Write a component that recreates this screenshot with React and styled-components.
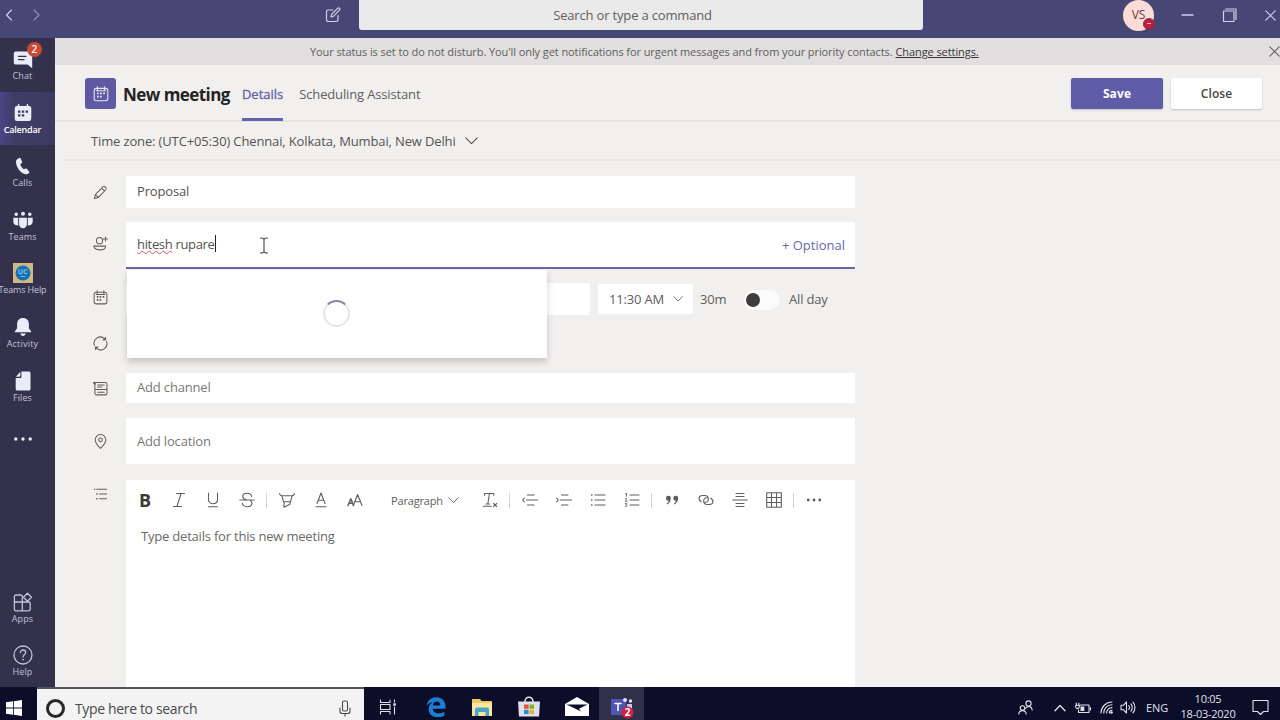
import React, { useState } from 'react';
import styled, { createGlobalStyle, keyframes } from 'styled-components';

const GlobalStyle = createGlobalStyle`
  * {
    box-sizing: border-box;
  }

  body {
    margin: 0;
    overflow: hidden;
    font-family: "Open Sans", "Noto Sans", sans-serif;
    font-size: 13px;
    letter-spacing: -0.17px;
    color: #555351;
  }

  button,
  input {
    font: inherit;
    letter-spacing: inherit;
  }
`;

// shell ==========

const Window = styled.div`
  display: flex;
  flex-direction: column;
  width: 1280px;
  height: 720px;
  overflow: hidden;
  background: #f1f0ef;
`;

const Body = styled.div`
  display: flex;
  height: 649px;
`;

const Svg = styled.svg`
  display: block;
  flex: none;
  width: ${(p) => p.$w || 16}px;
  height: ${(p) => p.$h || p.$w || 16}px;
  fill: none;
  stroke: currentColor;
  stroke-width: ${(p) => p.$stroke || 1.1};
  stroke-linecap: round;
  stroke-linejoin: round;

  .solid {
    fill: currentColor;
    stroke: none;
  }
`;

// title bar ==========

const TitleBar = styled.header`
  display: flex;
  align-items: center;
  height: 38px;
  padding-bottom: 8px;
  background: #464775;
  color: #cfcfee;
`;

const NavArrows = styled.div`
  display: flex;
  gap: 15px;
  width: 325px;
  padding-left: 3px;
`;

const NavArrow = styled.span`
  opacity: ${(p) => (p.$dim ? 0.55 : 1)};
`;

const SearchBox = styled.div`
  width: 564px;
  height: 30px;
  margin-left: 18px;
  border-radius: 0 0 3px 3px;
  background: #ebeaeb;
  color: #605e5c;
  line-height: 30px;
  padding-right: 17px;
  text-align: center;
`;

const Avatar = styled.div`
  position: relative;
  width: 31px;
  height: 31px;
  margin-left: 200px;
  border-radius: 50%;
  background: #fbdcd6;
  color: #6b3d3d;
  font-size: 12px;
  line-height: 30px;
  text-align: center;
`;

const Presence = styled.span`
  position: absolute;
  right: -1px;
  bottom: 1px;
  width: 12px;
  height: 12px;
  border-radius: 50%;
  border: 1px solid #7a3350;
  background: #bd1f3c;

  &::after {
    content: '';
    position: absolute;
    left: 3px;
    top: 4px;
    width: 4px;
    height: 1px;
    background: #f3b7bf;
  }
`;

const WindowControls = styled.div`
  display: flex;
  align-items: center;
  gap: 28px;
  margin-left: 27px;
`;

// left rail ==========

const Rail = styled.nav`
  display: flex;
  flex-direction: column;
  width: 55px;
  background: #33314c;
  color: #dcdcf0;
`;

const RailItem = styled.div`
  position: relative;
  display: flex;
  flex-direction: column;
  align-items: center;
  height: 53.7px;
  padding: ${(p) => p.$top || 11}px 10px 0 0;
  font-size: 9px;
  line-height: 12px;
  letter-spacing: ${(p) => p.$track || 0.1}px;
  white-space: nowrap;
  color: ${(p) => (p.$active ? '#fff' : '#c3c2d8')};
  font-weight: ${(p) => (p.$active ? 600 : 400)};
  background: ${(p) => (p.$active ? 'linear-gradient(90deg, #4a4685, #3f3d66 14px, #3d3b62)' : 'none')};

  svg {
    margin-bottom: 1px;
    color: ${(p) => (p.$outline ? '#c3c2d8' : '#ecebf8')};
  }
`;

const RailSpacer = styled.div`
  flex: 1;
`;

const RailBadge = styled.span`
  position: absolute;
  left: 27px;
  top: 4px;
  width: 15px;
  height: 15px;
  border-radius: 50%;
  background: #cc4a31;
  color: #fff;
  font-size: 10px;
  font-weight: 600;
  line-height: 15px;
  text-align: center;
`;

// main area ==========

const Main = styled.main`
  flex: 1;
  display: flex;
  flex-direction: column;
  min-width: 0;
`;

const Banner = styled.div`
  display: flex;
  align-items: center;
  height: 27px;
  padding-left: 255px;
  background: #e1dfdf;
  font-size: 11px;
  letter-spacing: -0.083px;
  white-space: nowrap;
  color: #605e5c;

  a {
    margin-left: 3px;
    color: #3b3a39;
    text-decoration: underline;
  }

  svg {
    margin: 0 0 1px 290px;
  }
`;

const Header = styled.div`
  display: flex;
  align-items: center;
  height: 57px;
  padding: 2px 18px 0 30px;
  border-bottom: 2px solid #e6e4e3;
`;

const HeaderIcon = styled.div`
  display: flex;
  align-items: center;
  justify-content: center;
  width: 31px;
  height: 31px;
  border-radius: 3px;
  background: #5d5aa2;
  color: #e5e4f7;
`;

const Title = styled.h1`
  margin: 1px 0 0 7px;
  font-size: 17px;
  font-weight: 700;
  letter-spacing: -0.55px;
  color: #252423;
`;

const Tab = styled.div`
  height: 55px;
  margin-left: ${(p) => p.$gap}px;
  line-height: 57px;
  letter-spacing: ${(p) => (p.$active ? 0 : -0.15)}px;
  color: ${(p) => (p.$active ? '#6361a8' : '#605e5c')};
  border-bottom: 3px solid ${(p) => (p.$active ? '#6361a8' : 'transparent')};
  -webkit-text-stroke: ${(p) => (p.$active ? '0.3px' : '0')};
`;

const Actions = styled.div`
  display: flex;
  gap: 8px;
  margin-left: auto;
`;

const Button = styled.button`
  width: ${(p) => (p.$primary ? 92 : 91)}px;
  height: 31px;
  padding: 0 0 1px;
  border: 0;
  border-radius: 2px;
  background: ${(p) => (p.$primary ? '#5f5ca8' : '#fff')};
  color: ${(p) => (p.$primary ? '#fff' : '#484644')};
  font-size: 12px;
  font-weight: ${(p) => (p.$primary ? 700 : 600)};
  letter-spacing: 0.1px;
  box-shadow: 0 1px 2px rgba(0, 0, 0, 0.2);
`;

const TimeZone = styled.div`
  display: flex;
  align-items: center;
  gap: 9px;
  height: 39px;
  margin-left: 10px;
  padding-left: 26px;
  letter-spacing: -0.14px;
  border-bottom: 2px solid #e8e6e5;
`;

// form ==========

const Form = styled.div`
  display: flex;
  flex-direction: column;
  padding: 15px 0 0 35px;
`;

const Row = styled.div`
  display: grid;
  grid-template-columns: 21px 729px;
  column-gap: 15px;
  height: ${(p) => p.$h}px;
  margin-bottom: ${(p) => p.$gap || 0}px;
`;

const RowIcon = styled.div`
  display: flex;
  justify-content: center;
  align-items: ${(p) => (p.$top ? 'flex-start' : 'center')};
  padding-top: ${(p) => p.$top || 0}px;
  color: #605e5c;

  svg {
    width: 15px;
    height: 15px;
  }
`;

const Field = styled.div`
  position: relative;
  display: flex;
  align-items: center;
  padding: 0 10px ${(p) => (p.$tall ? 0 : 2)}px 11px;
  background: #fff;
  color: ${(p) => (p.$placeholder ? '#7a7876' : '#555351')};
  box-shadow: ${(p) => (p.$focused ? 'inset 0 -2px 0 #6a66a6' : 'none')};
`;

const Typed = styled.span`
  margin-bottom: 2px;
  letter-spacing: -0.33px;
`;

const Misspelled = styled.span`
  text-decoration: underline wavy #e04a6a 1.3px;
  text-underline-offset: 1px;
  text-decoration-skip-ink: none;
`;

const Caret = styled.span`
  width: 1px;
  height: 17px;
  margin-bottom: 2px;
  background: #252423;
`;

const Optional = styled.span`
  margin-left: auto;
  letter-spacing: 0;
  color: #6a67a8;
`;

const Pointer = styled.div`
  position: absolute;
  left: 133px;
  top: 15px;
  color: #484644;
`;

const Suggestions = styled.div`
  position: absolute;
  left: 1px;
  top: 48px;
  z-index: 2;
  display: flex;
  align-items: center;
  justify-content: center;
  width: 420px;
  height: 88px;
  padding: 0 1px 1px 0;
  background: #fff;
  box-shadow: 0 4px 7px rgba(0, 0, 0, 0.18);
`;

const spin = keyframes`
  to { transform: rotate(360deg); }
`;

const Spinner = styled.div`
  width: 27px;
  height: 27px;
  border: 2px solid #e6e5ec;
  border-top-color: #8583a8;
  border-radius: 50%;
  animation: ${spin} 1s linear infinite;
  animation-play-state: paused;
`;

const TimeLine = styled.div`
  display: flex;
  align-items: center;
  color: #605e5c;
`;

const TimeBox = styled.div`
  display: flex;
  align-items: center;
  justify-content: space-between;
  width: ${(p) => p.$w}px;
  height: ${(p) => p.$h || 30}px;
  margin-left: ${(p) => p.$ml || 0}px;
  padding: 0 10px 0 11px;
  background: #fff;
`;

const Duration = styled.span`
  width: 44px;
  margin-left: 7px;
`;

const Toggle = styled.span`
  display: flex;
  align-items: center;
  width: 36px;
  height: 20px;
  padding-left: 2px;
  margin: 2px 9px 0 0;
  border-radius: 10px;
  background: #fbfbfb;

  &::before {
    content: '';
    width: 14px;
    height: 14px;
    border-radius: 50%;
    background: #3f3d3c;
  }
`;

const Editor = styled.div`
  background: #fff;
`;

const Toolbar = styled.div`
  display: flex;
  align-items: center;
  height: 40px;
  padding-left: 2px;
  color: #605e5c;
`;

const Tool = styled.div`
  display: flex;
  align-items: center;
  justify-content: center;
  width: 34px;
  height: 26px;
`;

const Separator = styled.i`
  width: 1px;
  height: 15px;
  margin: 0 3px 0 2px;
  background: #d6d4d2;
`;

const BoldLetter = styled.span`
  font-size: 18px;
  font-weight: 700;
  line-height: 1;
  letter-spacing: 0;
  color: #3b3a39;
`;

const ParagraphPicker = styled.div`
  display: flex;
  align-items: center;
  gap: 5px;
  width: 101px;
  padding: 1px 0 0 19px;
  font-size: 11px;
`;

const Details = styled.div`
  padding: 7px 15px;
  letter-spacing: -0.2px;
  color: #6b6967;
`;

// taskbar ==========

const Taskbar = styled.footer`
  display: flex;
  height: 33px;
  background: #0c0e29;
  color: #dfe0ec;
`;

const Start = styled.div`
  width: 37px;
  padding: 13px 0 0 6px;
`;

const TaskSearch = styled.div`
  display: flex;
  align-items: center;
  width: 327px;
  padding: 7px 12px 0 9px;
  background: #f3f3f3;
  border-top: 2px solid #55545c;
  color: #4a4a4a;
  font-size: 14px;
  letter-spacing: -0.35px;

  span {
    flex: 1;
    margin-left: 10px;
  }
`;

const CortanaRing = styled.i`
  width: 19px;
  height: 19px;
  border: 3px solid #26282a;
  border-radius: 50%;
`;

const TaskApp = styled.div`
  display: flex;
  justify-content: center;
  width: ${(p) => p.$w || 47}px;
  padding-top: ${(p) => p.$top || 9}px;
  background: ${(p) => (p.$active ? '#2f3049' : 'none')};
`;

const Tray = styled.div`
  display: flex;
  align-items: center;
  margin-left: auto;
  padding: 8px 11px 0 0;
  font-size: 11px;
`;

const TrayItem = styled.div`
  margin-right: ${(p) => p.$mr}px;
`;

const Clock = styled.div`
  width: 56px;
  margin: -4px 16px 0 12px;
  line-height: 15px;
  text-align: center;
  letter-spacing: -0.25px;
`;

// icons ==========

const Chevron = ({ w = 12 }) => (
  <Svg $w={w} $h={w * 0.58} $stroke={1} viewBox="0 0 12 7">
    <path d="M.7.8 6 6.1 11.3.8" />
  </Svg>
);

const CalendarIcon = ({ w = 16 }) => (
  <Svg $w={w} viewBox="0 0 16 16">
    <rect x="1.200" y="2.400" width="13.600" height="12.400" rx="2.200" />
    <path d="M4.400.8v3M11.600.8v3M3.500 4.700h9" />
    <path className="solid" d="M7 6.500h1.800v1.800H7zM10.200 6.500H12v1.800h-1.800zM4 6.500h1.800v1.800H4zM4 9.700h1.800v1.800H4zM7 9.700h1.800v1.800H7z" />
  </Svg>
);

const ChatIcon = () => (
  <Svg $w={20} viewBox="0 0 20 20">
    <path className="solid" d="M2.500 2.500h15a1.700 1.700 0 0 1 1.700 1.700v15L14.600 15.500H2.500A1.700 1.700 0 0 1 .8 13.800V4.200A1.700 1.700 0 0 1 2.500 2.500z" />
    <path d="M5.500 7.300h7.500M5.500 10.700h5.500" stroke="#33314c" strokeWidth="1.3" />
  </Svg>
);

const CalendarSolidIcon = () => (
  <Svg $w={20} viewBox="0 0 20 20">
    <path className="solid" d="M4 3h12a2.300 2.300 0 0 1 2.300 2.300v10.400A2.300 2.300 0 0 1 16 18H4a2.300 2.300 0 0 1-2.300-2.300V5.300A2.300 2.300 0 0 1 4 3z" />
    <path d="M5.600 1.800v3M14.400 1.800v3" strokeWidth="1.6" />
    <path d="M5 7.600h2.400v2.200H5zM8.800 7.600h2.400v2.200H8.800zM12.600 7.600H15v2.200h-2.400zM5 11.300h2.400v2.200H5zM8.800 11.300h2.400v2.200H8.800z" fill="#3f3d66" stroke="none" />
  </Svg>
);

const PhoneIcon = () => (
  <Svg $w={20} viewBox="0 0 20 20">
    <path className="solid" d="M4.100 3.200 6.200 2c.6-.3 1.200-.1 1.500.5l1.400 3.200c.2.500.1 1-.3 1.300L7.300 8.300c.6 2 1.800 3.700 3.500 5l1.800-.7c.5-.2 1-.1 1.300.3l2.200 2.600c.4.500.4 1.100-.1 1.500-1 1-2.500 1.600-4 1.100C7.300 16.700 3.600 11.500 3 6.500c-.1-1.300.2-2.500 1.100-3.300z" />
  </Svg>
);

const TeamsIcon = () => (
  <Svg $w={20} viewBox="0 0 20 20">
    <g className="solid">
      <circle cx="3.200" cy="4.200" r="1.700" />
      <circle cx="10" cy="3.800" r="2" />
      <circle cx="16.800" cy="4.200" r="1.700" />
      <path d="M.3 7.800h4.900v7.800C2 15.600.3 14 .3 11.500zM6.100 7.800h7.800v6.500c0 2.400-1.700 3.900-3.900 3.900s-3.900-1.500-3.900-3.900zM14.800 7.800h4.900v3.700c0 2.500-1.700 4.100-4.900 4.100z" />
    </g>
  </Svg>
);

const TeamsHelpIcon = () => (
  <Svg $w={20} viewBox="0 0 20 20">
    <rect width="20" height="20" fill="#cdb886" stroke="none" />
    <circle cx="10" cy="10" r="7.500" fill="#1770b3" stroke="none" />
    <path d="M6 6.500v2.800c0 2.200 3 2.200 3 0V6.500M14 7c-2.600-1-3.400 1.200-2.800 2.700.5 1.100 1.600 1.100 2.600.5M8.300 13.500h3.400" stroke="#79bfe8" strokeWidth="1.200" />
  </Svg>
);

const BellIcon = () => (
  <Svg $w={20} viewBox="0 0 20 20">
    <path className="solid" d="M10 1c3.600 0 5.900 2.600 5.900 6v4.200l2.300 3.200c.2.400 0 .9-.5.900H2.300c-.5 0-.7-.5-.5-.9l2.300-3.200V7C4.100 3.600 6.400 1 10 1zM7.300 16.500h5.400c-.3 1.500-1.300 2.400-2.700 2.400s-2.400-.9-2.700-2.400z" />
  </Svg>
);

const FileIcon = () => (
  <Svg $w={20} viewBox="0 0 20 20">
    <path className="solid" d="M8.400.4H16a1.500 1.500 0 0 1 1.500 1.500v16.200a1.500 1.500 0 0 1-1.500 1.500H4.200a1.500 1.500 0 0 1-1.500-1.500V7h4.700a1 1 0 0 0 1-1z" />
    <path className="solid" d="M7.300.8v4a1 1 0 0 1-1 1H2.900z" />
  </Svg>
);

const MoreIcon = ({ w = 20, r = 1.7 }) => (
  <Svg $w={w} viewBox="0 0 20 20">
    <g className="solid">
      <circle cx="2.800" cy="10" r={r} />
      <circle cx="10" cy="10" r={r} />
      <circle cx="17.200" cy="10" r={r} />
    </g>
  </Svg>
);

const AppsIcon = () => (
  <Svg $w={20} $stroke={1.3} viewBox="0 0 20 20">
    <path d="M9.300 10V4.600A1.600 1.600 0 0 0 7.700 3H3a1.600 1.600 0 0 0-1.600 1.600v12.600A1.600 1.600 0 0 0 3 18.800h12.600a1.600 1.600 0 0 0 1.600-1.600v-5.600a1.600 1.600 0 0 0-1.600-1.600H1.400M9.300 10v8.800" />
    <path d="m14.500 1.200 4 4-4 4-4-4z" />
  </Svg>
);

const HelpIcon = () => (
  <Svg $w={20} $stroke={1.3} viewBox="0 0 20 20">
    <circle cx="10" cy="10" r="9" />
    <path d="M7.500 7.600c0-3.600 5.200-3.300 5.200 0 0 2-2.600 2-2.600 4.400" />
    <circle className="solid" cx="10.100" cy="14.600" r=".9" />
  </Svg>
);

const ComposeIcon = () => (
  <Svg $w={16} $stroke={1.2} viewBox="0 0 16 16">
    <path d="M8 3H3.200a1.700 1.700 0 0 0-1.700 1.700v8.100a1.700 1.700 0 0 0 1.700 1.700h8.100a1.700 1.700 0 0 0 1.700-1.700V8.500" />
    <path d="m6 10 .7-2.800 6.200-6.100c1-.8 2.600.7 1.800 1.800L8.600 9.200z" />
  </Svg>
);

const PencilIcon = () => (
  <Svg viewBox="0 0 16 16">
    <path d="m1.500 14.500 1-4.200 8.300-8.500c1.500-1.300 4.200 1.300 3 3L5.600 13.400zM9.300 3.500l3 3M2.700 10.300l3 3" />
  </Svg>
);

const InviteIcon = () => (
  <Svg viewBox="0 0 16 16">
    <circle cx="7" cy="5" r="3.300" />
    <path d="M.8 10.800h12.600c0 2.300-2.600 4-6.300 4S.8 13.100.8 10.800zM13.300 1v4.400M11.100 3.200h4.400" />
  </Svg>
);

const RepeatIcon = () => (
  <Svg viewBox="0 0 16 16">
    <path d="M1.600 10.200A6.600 6.600 0 0 1 12.300 3M14.400 5.800A6.600 6.600 0 0 1 3.700 13" />
    <path className="solid" d="M10 4.800 14.200 4.600 13.600.6zM6 11.200l-4.200.2.600 4z" />
  </Svg>
);

const ChannelIcon = () => (
  <Svg viewBox="0 0 16 16">
    <path d="M.8 1.500h12.400c1.100 0 1.700.7 1.700 1.700v9.800c0 1.100-.7 1.800-1.800 1.800H3.800c-1.100 0-1.800-.7-1.800-1.800V3.200C2 2.200 1.500 1.500.8 1.500zM2 9h12.900M5 4.200h7M5 6.400h4.500M5 11.900h7" />
    <path className="solid" d="M.3 1h2.500v2.800H2C1 3.800.3 3 .3 2z" />
  </Svg>
);

const PinIcon = () => (
  <Svg viewBox="0 0 16 16">
    <path d="M8 15.400C4.300 11.600 2.300 9 2.300 6.300a5.700 5.700 0 0 1 11.400 0c0 2.700-2 5.300-5.700 9.100z" />
    <circle cx="8" cy="6.200" r="2" />
  </Svg>
);

const AgendaIcon = () => (
  <Svg viewBox="0 0 16 16">
    <path d="M4 2.500h10.500M7 7.500h7.500M7 12.500h7.500" />
    <path d="M1.500 2.500h.4M4 7.500h.4M4 12.500h.4" strokeWidth="1.500" />
  </Svg>
);

const ItalicIcon = () => (
  <Svg viewBox="0 0 16 16"><path d="M5.500 1.500h8M2.500 14.500h8M10 1.500l-4 13" /></Svg>
);

const UnderlineIcon = () => (
  <Svg viewBox="0 0 16 16"><path d="M3.500 1v6.500c0 5.600 9 5.600 9 0V1M3.500 14.800h9" /></Svg>
);

const StrikeIcon = () => (
  <Svg viewBox="0 0 16 16"><path d="M12.600 4.500C12 .1 3.800.2 3.800 4.400c0 2.700 2.700 3 4.500 3.600M3.300 11.300c.5 4.400 9.600 4.500 9.600.3 0-1-.3-2-1.200-2.700M.8 8h14.400" /></Svg>
);

const HighlightIcon = () => (
  <Svg viewBox="0 0 16 16"><path d="M.6 1.500c.2 1.500.9 2.200 2.400 2.200h10c1.500 0 2.200-.7 2.400-2.200M2.800 3.700l1.700 6h7l1.700-6M5 9.700v5.500l6-3V9.700" /></Svg>
);

const FontColorIcon = () => (
  <Svg viewBox="0 0 16 16"><path d="M4 11.500 8 1l4 10.500M5.200 8.200h5.600M3 14.800h10" /></Svg>
);

const FontSizeIcon = () => (
  <Svg viewBox="0 0 16 16"><path d="M6.300 13.500 10.600 2.500 15 13.500M7.700 9.800h5.900" /><path d="M1 13.500 3.800 6.700l2.700 6.800M2 11.300h3.500" strokeWidth="1.500" /></Svg>
);

const ClearFormatIcon = () => (
  <Svg viewBox="0 0 16 16"><path d="M2.500 3.200V1.500h9.300v1.700M7.500 1.500 5.800 12M4 12h3.500M1.300 14.300h8M11.500 11.500l3.200 3.200M14.700 11.500l-3.200 3.200" /></Svg>
);

const IndentIcon = ({ out }) => (
  <Svg viewBox="0 0 16 16">
    <path d="M5.500 3h6.500M4.500 8h11M5.500 13h6.500" />
    <path d={out ? 'M2.300 6.200.7 8l1.600 1.800' : 'M.7 6.200 2.300 8 .7 9.800'} />
  </Svg>
);

const BulletsIcon = () => (
  <Svg viewBox="0 0 16 16">
    <path d="M5 3h10M5 8h10M5 13h10" />
    <path d="M1.600 3h.3M1.600 8h.3M1.600 13h.3" strokeWidth="1.600" />
  </Svg>
);

const NumbersIcon = () => (
  <Svg viewBox="0 0 16 16"><path d="M6 3h9M6 8h9M6 13h9" /><path d="M1.500 1.800l1-.5v3M1.300 6.700c1.700-.8 2 .4 0 2.600h1.700M1.300 11.600h1.500l-.9 1.200c1.600 0 1.200 2.200-.6 1.600" strokeWidth=".9" /></Svg>
);

const QuoteIcon = () => (
  <Svg viewBox="0 0 16 16"><path className="solid" d="M4.300 3.800a2.300 2.300 0 0 1 2.500 2.500c0 3-1.400 5.200-3.800 6.200l-.4-.7c1.300-.9 1.900-2 2-3.200A2.300 2.300 0 0 1 2 6.200a2.300 2.300 0 0 1 2.300-2.400zM11.600 3.800a2.300 2.300 0 0 1 2.500 2.500c0 3-1.400 5.200-3.800 6.200l-.4-.7c1.300-.9 1.900-2 2-3.200a2.300 2.300 0 0 1-2.600-2.400 2.300 2.300 0 0 1 2.300-2.400z" /></Svg>
);

const LinkIcon = () => (
  <Svg viewBox="0 0 16 16"><path d="M3.200 9.800C-.2 7.600.7 3.500 4.300 3.500h2.500c4.500 0 4.900 6.800.2 6.800M12.800 6.200c3.400 2.200 2.500 6.300-1.100 6.300H9.200c-4.500 0-4.900-6.800-.2-6.800" /></Svg>
);

const AlignIcon = () => (
  <Svg viewBox="0 0 16 16"><path d="M4 1.500h8M4 4.500h8M.8 8h14.400M4 11.500h8M4 14.500h8" /></Svg>
);

const TableIcon = () => (
  <Svg viewBox="0 0 16 16"><path d="M.7.7h14.600v14.600H.7zM5.500.7v14.600M10.500.7v14.600M.7 5.500h14.600M.7 10.500h14.600" /></Svg>
);

const CrossIcon = () => (
  <Svg $w={11} viewBox="0 0 11 11"><path d="m.8.8 9.400 9.400M10.200.8.800 10.200" /></Svg>
);

const IBeamIcon = () => (
  <Svg $w={10} $h={17} viewBox="0 0 10 17"><path d="M1.500 1C3.500 1 5 1.200 5 2.500 5 1.200 6.500 1 8.500 1M5 2.500v12M1.500 16C3.500 16 5 15.800 5 14.500c0 1.300 1.500 1.500 3.500 1.500" /></Svg>
);

// data ==========

const topItems = [
  { label: 'Chat', icon: <ChatIcon />, badge: 2 },
  { label: 'Calendar', icon: <CalendarSolidIcon />, active: true, track: -0.2 },
  { label: 'Calls', icon: <PhoneIcon /> },
  { label: 'Teams', icon: <TeamsIcon /> },
  { label: 'Teams Help', icon: <TeamsHelpIcon />, track: -0.15, top: 10 },
  { label: 'Activity', icon: <BellIcon />, track: 0.2 },
  { label: 'Files', icon: <FileIcon /> },
  { label: '', icon: <MoreIcon />, top: 15 },
];

const bottomItems = [
  { label: 'Apps', icon: <AppsIcon />, outline: true, top: 12 },
  { label: 'Help', icon: <HelpIcon />, outline: true, top: 12 },
];

const leftTools = [
  <BoldLetter>B</BoldLetter>,
  <ItalicIcon />,
  <UnderlineIcon />,
  <StrikeIcon />,
  null,
  <HighlightIcon />,
  <FontColorIcon />,
  <FontSizeIcon />,
];

const rightTools = [
  <ClearFormatIcon />,
  null,
  <IndentIcon out />,
  <IndentIcon />,
  <BulletsIcon />,
  <NumbersIcon />,
  null,
  <QuoteIcon />,
  <LinkIcon />,
  <AlignIcon />,
  <TableIcon />,
  null,
  <MoreIcon w={16} r={1.8} />,
];

const renderTools = (tools) =>
  tools.map((tool, i) => (tool ? <Tool key={i}>{tool}</Tool> : <Separator key={i} />));

const renderRail = (items) =>
  items.map((item, i) => (
    <RailItem key={i} $active={item.active} $track={item.track} $top={item.top} $outline={item.outline}>
      {item.icon}
      {item.label}
      {item.badge && <RailBadge>{item.badge}</RailBadge>}
    </RailItem>
  ));

function TopBar() {
  return (
    <TitleBar>
      <NavArrows>
        <NavArrow>
          <Svg $w={12} viewBox="0 0 12 12"><path d="M8.500 1 3.500 6l5 5" /></Svg>
        </NavArrow>
        <NavArrow $dim>
          <Svg $w={12} viewBox="0 0 12 12"><path d="m4 1 5 5-5 5" /></Svg>
        </NavArrow>
      </NavArrows>
      <ComposeIcon />
      <SearchBox>Search or type a command</SearchBox>
      <Avatar>
        VS
        <Presence />
      </Avatar>
      <WindowControls>
        <Svg $w={13} $stroke={1.3} viewBox="0 0 13 13"><path d="M1 6h11" /></Svg>
        <Svg $w={15} $stroke={1.2} viewBox="0 0 15 15"><path d="M1.500 3h10.500v10.500H1.500zM3.500 1h10.500v10.500" /></Svg>
        <CrossIcon />
      </WindowControls>
    </TitleBar>
  );
}

function MeetingForm() {
  const [attendee] = useState('rupare');

  return (
    <Form>
      <Row $h={32} $gap={14}>
        <RowIcon><PencilIcon /></RowIcon>
        <Field>Proposal</Field>
      </Row>

      <Row $h={47} $gap={14}>
        <RowIcon $top={14}><InviteIcon /></RowIcon>
        <Field $focused>
          <Typed>
            <Misspelled>hitesh</Misspelled>
            &nbsp;{attendee}
          </Typed>
          <Caret />
          <Pointer><IBeamIcon /></Pointer>
          <Optional>+ Optional</Optional>
          <Suggestions><Spinner /></Suggestions>
        </Field>
      </Row>

      <Row $h={32} $gap={13}>
        <RowIcon $top={7}><CalendarIcon /></RowIcon>
        <TimeLine>
          <TimeBox $w={464} $h={32} />
          <TimeBox $w={95} $ml={8}>
            11:30 AM
            <Chevron w={10} />
          </TimeBox>
          <Duration>30m</Duration>
          <Toggle />
          All day
        </TimeLine>
      </Row>

      <Row $h={31} $gap={14}>
        <RowIcon><RepeatIcon /></RowIcon>
      </Row>

      <Row $h={30} $gap={15}>
        <RowIcon><ChannelIcon /></RowIcon>
        <Field $placeholder>Add channel</Field>
      </Row>

      <Row $h={46} $gap={16}>
        <RowIcon><PinIcon /></RowIcon>
        <Field $placeholder $tall>Add location</Field>
      </Row>

      <Row $h={207}>
        <RowIcon $top={7}><AgendaIcon /></RowIcon>
        <Editor>
          <Toolbar>
            {renderTools(leftTools)}
            <ParagraphPicker>
              Paragraph
              <Chevron w={11} />
            </ParagraphPicker>
            {renderTools(rightTools)}
          </Toolbar>
          <Details>Type details for this new meeting</Details>
        </Editor>
      </Row>
    </Form>
  );
}

function BottomBar() {
  return (
    <Taskbar>
      <Start>
        <Svg viewBox="0 0 16 16">
          <path fill="#fff" stroke="none" d="M0 2.300 7 1.300v6.300H0zM7.800 1.200 16 0v7.600H7.800zM0 8.400h7v6.300l-7-1zM7.800 8.400H16V16l-8.200-1.200z" />
        </Svg>
      </Start>
      <TaskSearch>
        <CortanaRing />
        <span>Type here to search</span>
        <Svg $w={14} $h={17} viewBox="0 0 14 17">
          <rect x="4.500" y="1" width="5" height="10" rx="1.500" />
          <path d="M2 8v3.200c0 1.500 1 2.300 2.500 2.300h5c1.500 0 2.500-.8 2.500-2.300V8M7 13.500V16" />
        </Svg>
      </TaskSearch>

      <TaskApp $w={47} $top={12}>
        <Svg $w={18} $h={16} viewBox="0 0 18 16">
          <path d="M1.500 1v2.500h9.500V1M1.500 5.500H11v5H1.500zM1.500 15v-2.500H11V15M15.500 1v2M15.500 8v7" />
          <rect className="solid" x="14.300" y="4.300" width="2.500" height="2.500" />
        </Svg>
      </TaskApp>
      <TaskApp $w={50} $top={10}>
        <Svg $w={20} viewBox="0 0 20 20">
          <path fill="#1b7fd6" stroke="none" d="M.6 8.800C1.300 3.500 5.400.3 10.200.3c5.900 0 9.300 4.200 9.300 9.200v2.300H6.700c.2 3 2.800 4.500 5.900 4.500 2.200 0 4.100-.5 5.700-1.500v4c-1.900 1-4.300 1.400-6.600 1.400-5.400 0-9-3.200-9-8 0-3.300 1.800-6.100 4.600-7.500C3.900 5.400 1.900 6.800.6 8.800zM6.900 8.500h7.400c0-2.400-1.200-3.900-3.600-3.900-2.200 0-3.500 1.700-3.800 3.900z" />
        </Svg>
      </TaskApp>
      <TaskApp $w={42} $top={11}>
        <Svg $w={22} $h={19} viewBox="0 0 22 19">
          <path fill="#e9c766" stroke="none" d="M1 1h8l1.500 2H21v15H1z" />
          <path fill="#fbe6a0" stroke="none" d="M1 5h20v13H1z" />
          <path fill="#4aa7c9" stroke="none" d="M4 18v-6.500a2 2 0 0 1 2-2h10a2 2 0 0 1 2 2V18h-3.500v-4h-7v4z" />
        </Svg>
      </TaskApp>
      <TaskApp $w={51} $top={8}>
        <Svg $w={24} $h={24} viewBox="0 0 24 24">
          <path d="M8 7c0-6.500 8-6.500 8 0" strokeWidth="1.500" />
          <path className="solid" d="M1 6.500h22l-1 15H2z" />
          <path fill="#e2552f" stroke="none" d="M7 9.500h4.600v4.300H7z" />
          <path fill="#7fb32c" stroke="none" d="M12.500 9.500h4.600v4.300h-4.600z" />
          <path fill="#2a8bd8" stroke="none" d="M7 14.800h4.600v4.300H7z" />
          <path fill="#e9b32b" stroke="none" d="M12.500 14.800h4.600v4.300h-4.600z" />
        </Svg>
      </TaskApp>
      <TaskApp $w={45} $top={10}>
        <Svg $w={24} $h={20} viewBox="0 0 24 20">
          <path fill="#fff" stroke="none" d="M0 7 12 0l12 7v12H0z" />
          <path fill="#0c0e29" stroke="none" d="M1.500 7.500h21l-8.500 4.200 2 2.800-4.500-2.300z" />
        </Svg>
      </TaskApp>
      <TaskApp $w={45} $top={9} $active>
        <Svg $w={24} $h={24} viewBox="0 0 24 24">
          <rect x="1" y="3" width="15" height="16" rx="1" fill="#5054b4" stroke="none" />
          <path d="M5 7.500h6M8 7.500v7" stroke="#fff" strokeWidth="1.600" />
          <circle cx="15" cy="4" r="2" fill="#e6e6fa" stroke="none" />
          <circle cx="20.500" cy="5" r="1.700" fill="#e6e6fa" stroke="none" />
          <path d="M17 8h5v5h-5z" fill="#c9c9ee" stroke="none" />
          <circle cx="17.500" cy="16.500" r="6" fill="#d2203f" stroke="none" />
          <text x="17.500" y="20" textAnchor="middle" fontSize="10" fontWeight="700" fill="#fff" stroke="none">2</text>
        </Svg>
      </TaskApp>

      <Tray>
        <TrayItem $mr={21}>
          <Svg $w={15} viewBox="0 0 15 15">
            <circle cx="10.500" cy="3.500" r="2.600" />
            <circle cx="4.500" cy="8" r="2.300" />
            <path d="M.8 14c.3-4.500 7-4.500 7.300 0M7.500 8.500c2.500-3.500 6.500-2 6.700 1.500" />
          </Svg>
        </TrayItem>
        <TrayItem $mr={9}>
          <Svg $w={12} $h={8} $stroke={1.3} viewBox="0 0 12 8"><path d="M1 6.800 6 1.500l5 5.300" /></Svg>
        </TrayItem>
        <TrayItem $mr={9}>
          <Svg $w={16} $h={12} viewBox="0 0 16 12">
            <path d="M5 3h9v7.500H3.500V8M15.500 5.500v2.500M1.200 1v2M3.800 1v2M.7 3.200h3.600v1.600a1.800 1.800 0 0 1-3.600 0z" />
            <path className="solid" d="M5.500 4.500h3.800V9H5.500z" />
          </Svg>
        </TrayItem>
        <TrayItem $mr={7}>
          <Svg $w={13} viewBox="0 0 13 13">
            <path d="M1 12C1 6 6 1 12 1M3.800 12c0-4.600 3.600-8.200 8.200-8.200M6.600 12c0-3 2.400-5.400 5.400-5.400M9.300 12c0-1.500 1.200-2.700 2.700-2.700" />
            <circle className="solid" cx="11.500" cy="11.500" r="1.300" />
          </Svg>
        </TrayItem>
        <TrayItem $mr={10}>
          <Svg $w={16} $h={13} viewBox="0 0 16 13">
            <path d="M1 4.300h2.300L6.500 1v11L3.300 8.700H1zM8.800 4.500c.9 1.200.9 2.800 0 4M10.900 2.800c1.800 2 1.800 5.400 0 7.400M13 1.200c2.600 3 2.600 7.600 0 10.600" />
          </Svg>
        </TrayItem>
        <span>ENG</span>
        <Clock>
          10:05
          <br />
          18-03-2020
        </Clock>
        <Svg $w={17} viewBox="0 0 17 17"><path d="M1 1.500h15v11h-4.500L8.500 15.500l-3-3H1z" /></Svg>
      </Tray>
    </Taskbar>
  );
}

export default function App() {
  return (
    <>
      <GlobalStyle />
      <Window>
        <TopBar />
        <Body>
          <Rail>
            {renderRail(topItems)}
            <RailSpacer />
            {renderRail(bottomItems)}
          </Rail>
          <Main>
            <Banner>
              Your status is set to do not disturb. You'll only get notifications for urgent messages and from your priority contacts.
              <a>Change settings.</a>
              <CrossIcon />
            </Banner>
            <Header>
              <HeaderIcon><CalendarIcon /></HeaderIcon>
              <Title>New meeting</Title>
              <Tab $active $gap={12}>Details</Tab>
              <Tab $gap={16}>Scheduling Assistant</Tab>
              <Actions>
                <Button $primary>Save</Button>
                <Button>Close</Button>
              </Actions>
            </Header>
            <TimeZone>
              Time zone: (UTC+05:30) Chennai, Kolkata, Mumbai, New Delhi
              <Chevron w={13} />
            </TimeZone>
            <MeetingForm />
          </Main>
        </Body>
        <BottomBar />
      </Window>
    </>
  );
}
